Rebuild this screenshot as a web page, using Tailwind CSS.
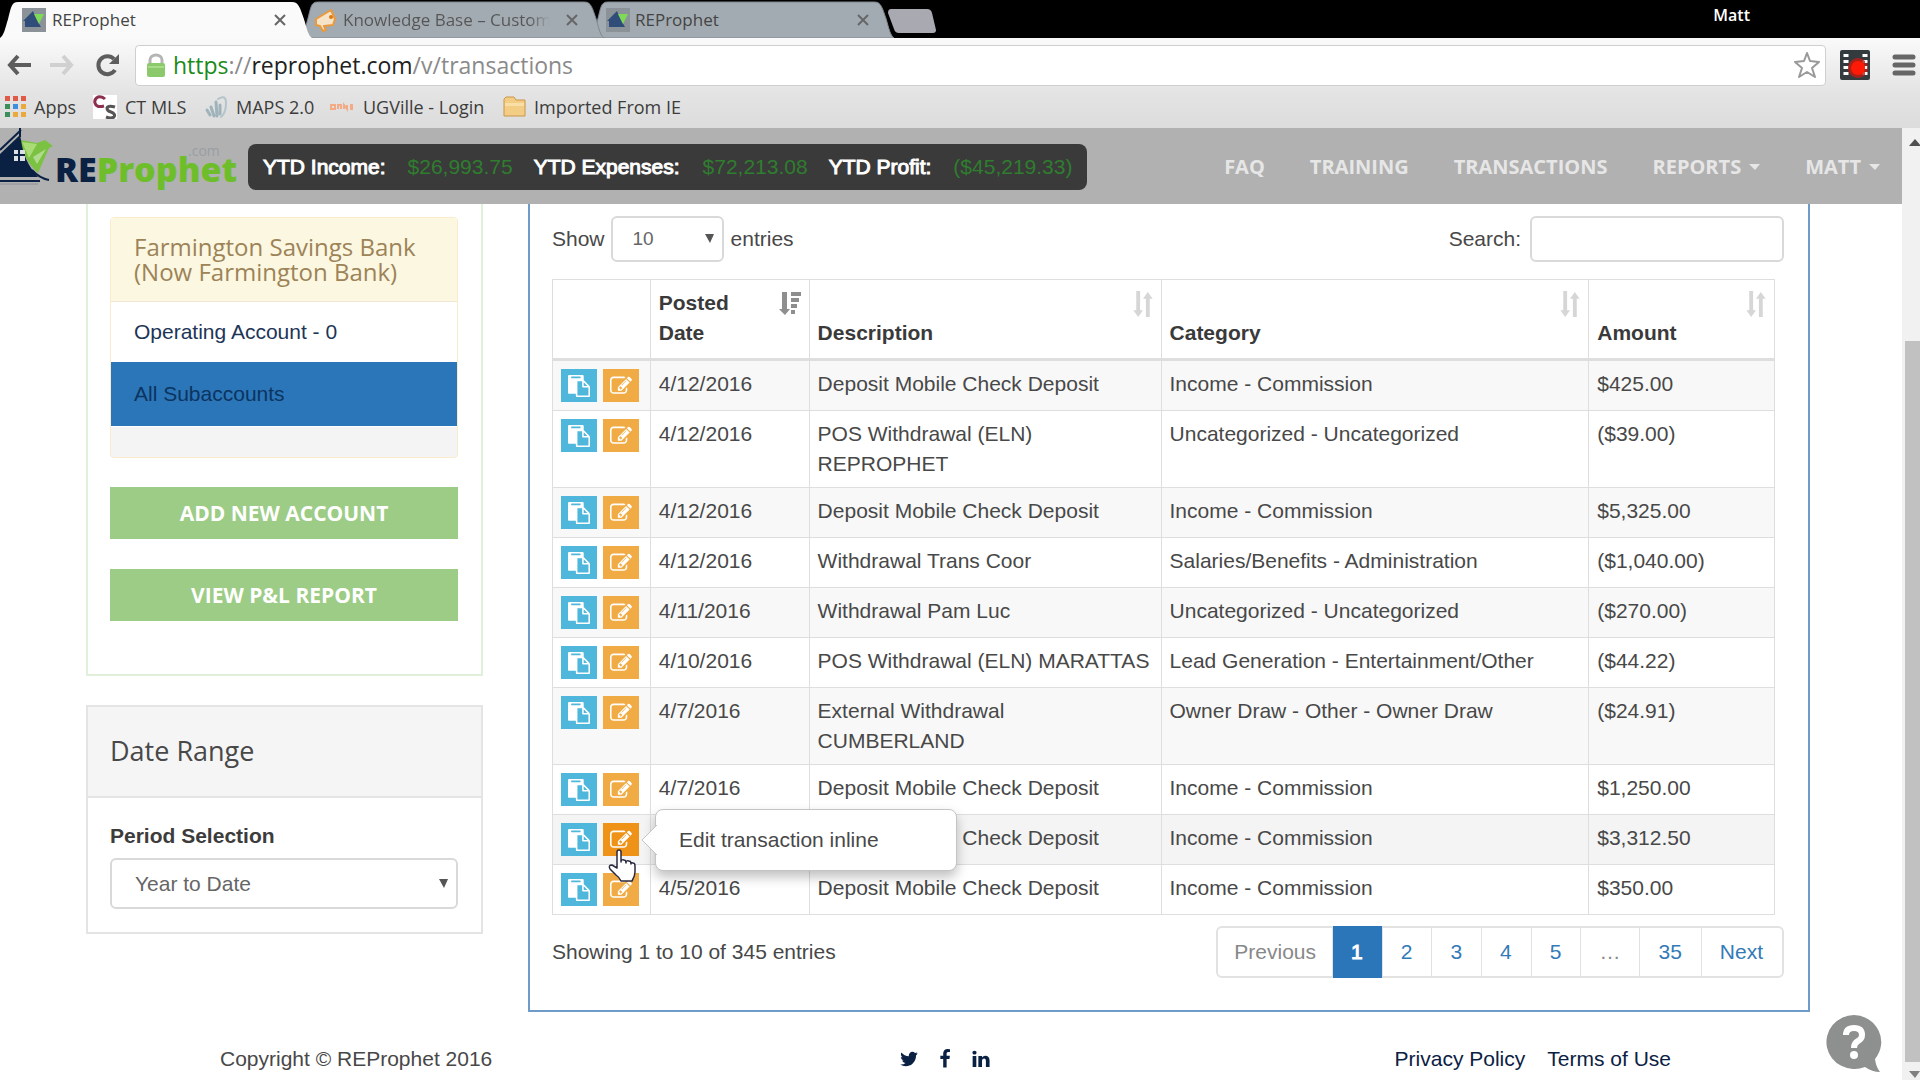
<!DOCTYPE html>
<html lang="en">
<head>
<meta charset="utf-8">
<meta name="viewport" content="width=device-width, initial-scale=1">
<title>REProphet</title>
<script src="https://cdn.jsdelivr.net/npm/@tailwindcss/browser@4"></script>
</head>
<body class="flex min-h-screen flex-col overflow-x-hidden bg-white font-['Liberation_Sans',Arial,sans-serif] text-[21px] leading-[30px] text-[#484848]">

<svg class="hidden" aria-hidden="true">
  <symbol id="paste" viewBox="0 0 1792 1792"><path d="M768 1664h896v-640h-416q-40 0-68-28t-28-68v-416h-384v1152zm256-1440v-64q0-13-9.500-22.500t-22.500-9.500h-704q-13 0-22.500 9.500t-9.500 22.500v64q0 13 9.500 22.500t22.500 9.500h704q13 0 22.500-9.500t9.500-22.500zm256 672h299l-299-299v299zm512 128v672q0 40-28 68t-68 28h-960q-40 0-68-28t-28-68v-160h-544q-40 0-68-28t-28-68v-1344q0-40 28-68t68-28h1088q40 0 68 28t28 68v328q21 13 36 28l408 408q28 28 48 76t20 88z"/></symbol>
  <symbol id="edit" viewBox="0 0 1792 1792"><path d="M888 1184l116-116-152-152-116 116v56h96v96h56zm440-720q-16-16-33 1l-350 350q-17 17-1 33t33-1l350-350q17-17 1-33zm80 594v190q0 119-84.500 203.500t-203.500 84.500h-832q-119 0-203.500-84.500t-84.500-203.500v-832q0-119 84.500-203.500t203.500-84.500h832q63 0 117 25 15 7 18 23 3 17-9 29l-49 49q-14 14-32 8-23-6-45-6h-832q-66 0-113 47t-47 113v832q0 66 47 113t113 47h832q66 0 113-47t47-113v-126q0-13 9-22l64-64q15-15 35-7t20 29zm-96-738l288 288-672 672h-288v-288zm444 132l-92 92-288-288 92-92q28-28 68-28t68 28l152 152q28 28 28 68t-28 68z"/></symbol>
  <symbol id="sort" viewBox="0 0 20 28"><path d="M3 0h4v20h3l-5 7-5-7h3zM13 27h4V8h3l-5-7-5 7h3z"/></symbol>
  <symbol id="favicon" viewBox="0 0 24 24"><path fill="#8b9399" d="M0 0h24v24H0z"/><path fill="#2f4d78" d="M1 13L11 3l4 9 4 7H3v-6z"/><path fill="#7ed957" d="M12 6h10l-5 10z"/></symbol>
  <symbol id="close" viewBox="0 0 12 12"><path stroke="#666" stroke-width="2" fill="none" d="M1 1l10 10M11 1L1 11"/></symbol>
  <symbol id="tab" viewBox="0 0 310 37" preserveAspectRatio="none"><path d="M0 37C4 34 5 28 8 18C11 7 11 1 18 1H290C297 1 298 7 302 18C305 28 306 34 310 37z"/></symbol>
</svg>

<!-- Browser tab strip -->
<div class="relative flex h-[38px] items-end bg-black font-['Open_Sans',sans-serif] text-[17px] text-[#444]">
  <div class="relative z-20 flex h-[37px] w-[312px] items-center">
    <svg class="absolute inset-0 size-full fill-[#fafafa]"><use href="#tab"/></svg>
    <svg class="relative ml-[22px] size-6"><use href="#favicon"/></svg>
    <span class="relative ml-[6px] flex-1">REProphet</span>
    <button class="relative mr-[26px]" aria-label="Close tab"><svg class="size-3"><use href="#close"/></svg></button>
  </div>
  <div class="relative z-10 -ml-[12px] flex h-[37px] w-[304px] items-center">
    <svg class="absolute inset-0 size-full fill-[#a3abb2] stroke-[#80878d]"><use href="#tab"/></svg>
    <svg class="relative ml-[13px] size-6" viewBox="0 0 24 24"><path fill="#f6e3c8" stroke="#e99a3c" stroke-width="2" stroke-linejoin="round" d="M18 2L3 11v6l4 1 3 5 3-1-2-4 9-1 2-6z"/><circle cx="18" cy="9" r="2" fill="#e07a10"/></svg>
    <span class="relative ml-[6px] w-[207px] overflow-hidden bg-gradient-to-r from-[#555] from-90% to-transparent bg-clip-text whitespace-nowrap text-transparent">Knowledge Base – Custom</span>
    <button class="relative ml-[16px]" aria-label="Close tab"><svg class="size-3"><use href="#close"/></svg></button>
  </div>
  <div class="relative -ml-[14px] flex h-[37px] w-[304px] items-center">
    <svg class="absolute inset-0 size-full fill-[#a3abb2] stroke-[#80878d]"><use href="#tab"/></svg>
    <svg class="relative ml-[16px] size-6"><use href="#favicon"/></svg>
    <span class="relative ml-[5px] flex-1">REProphet</span>
    <button class="relative mr-[25px]" aria-label="Close tab"><svg class="size-3"><use href="#close"/></svg></button>
  </div>
  <button class="mb-[5px] -ml-[6px]" aria-label="New tab"><svg class="h-[24px] w-[48px]" viewBox="0 0 48 24"><path fill="#a9a9b2" d="M3 0h36q4 0 5 4l4 17q0 3-3 3H11q-4 0-5-4L0 4q0-4 3-4z"/></svg></button>
  <span class="mr-[170px] mb-[9px] ml-auto text-[16px] leading-[28px] font-semibold text-white">Matt</span>
</div>

<!-- Address bar -->
<div class="flex h-[54px] items-center bg-gradient-to-b from-[#fafafa] to-[#e4e4e4] pl-[7px] font-['Open_Sans',sans-serif]">
  <button aria-label="Back"><svg class="size-6" viewBox="0 0 24 24" fill="none" stroke="#5d5d5d" stroke-width="4"><path d="M11 3L3 12l8 9M3 12h21"/></svg></button>
  <button class="ml-[19px]" aria-label="Forward"><svg class="size-6" viewBox="0 0 24 24" fill="none" stroke="#d0d0d0" stroke-width="4"><path d="M13 3l8 9-8 9M21 12H0"/></svg></button>
  <button class="ml-[22px]" aria-label="Reload"><svg class="size-6" viewBox="0 0 24 24"><path fill="none" stroke="#5d5d5d" stroke-width="4" d="M19 17A9 9 0 1 1 18 6"/><path fill="#5d5d5d" d="M23 1v10H13z"/></svg></button>
  <div class="ml-[15px] flex h-[41px] flex-1 items-center rounded border border-[#cfcfcf] bg-white pr-[4px] pl-[10px]">
    <svg class="h-[25px] w-[20px]" viewBox="0 0 20 25"><path fill="none" stroke="#b5b5b5" stroke-width="3" d="M4 12V7a6 5 0 0 1 12 0v5"/><rect x="1" y="10" width="18" height="14" rx="2" fill="#8cc96b"/><path stroke="#a8dc8b" stroke-width="2" d="M2 14h16"/></svg>
    <p class="ml-[7px] flex-1 text-[23px] whitespace-nowrap text-[#8a8a8a]"><span class="text-[#1b8a1b]">https</span>://<span class="text-[#222]">reprophet.com</span>/v/transactions</p>
    <button aria-label="Bookmark"><svg class="size-[28px]" viewBox="0 0 28 28"><path fill="#fff" stroke="#999" stroke-width="2" stroke-linejoin="round" d="M14 2l3 8 9 1-7 6 3 9-8-5-8 5 3-9-7-6 9-1z"/></svg></button>
  </div>
  <svg class="ml-[14px] h-[30px] w-[30px]" viewBox="0 0 30 30"><rect width="30" height="30" rx="2" fill="#343b3f"/><path stroke="#fff" stroke-width="5" stroke-dasharray="3 3" d="M6 4v24M25 4v24"/><circle cx="18" cy="18" r="10" fill="#c41a10" fill-opacity=".8"/><circle cx="18" cy="18" r="7" fill="#ff1a08"/><path stroke="#fff" stroke-width="2" stroke-dasharray="3 3" d="M26 4v24"/></svg>
  <button class="mr-[4px] ml-[22px]" aria-label="Menu"><svg class="h-[22px] w-[24px]" viewBox="0 0 24 22"><path stroke="#666" stroke-width="5" stroke-linecap="round" d="M3 3h18M3 11h18M3 19h18"/></svg></button>
</div>

<!-- Bookmarks bar -->
<nav class="flex h-[36px] items-center bg-gradient-to-b from-[#e4e4e4] to-[#dcdcdc] pb-[7px] pl-[5px] font-['Open_Sans',sans-serif] text-[18px] whitespace-nowrap text-[#3c3c3c]" aria-label="Bookmarks">
  <a href="#" class="flex w-[88px] items-center gap-[8px]">
    <svg class="size-[21px]" viewBox="0 0 21 21"><path fill="#e05a47" d="M0 0h5v5H0zM8 0h5v5H8zM16 0h5v5h-5z"/><path fill="#3a8f5c" d="M0 8h5v5H0zM0 16h5v5H0z"/><path fill="#3f8fe0" d="M8 8h5v5H8z"/><path fill="#eaa93a" d="M16 8h5v5h-5zM8 16h5v5H8zM16 16h5v5h-5z"/></svg>Apps</a>
  <a href="#" class="flex w-[111px] items-center gap-[8px]">
    <svg class="size-6 bg-white" viewBox="0 0 24 24" fill="none" stroke-width="3"><path stroke="#8c2f50" d="M12 4Q9 1 5 2 1 4 2 8q1 5 9 3"/><path stroke="#555" d="M22 12q-7-2-8 1 0 3 4 4 5 2 3 5-3 2-8 0"/></svg>CT MLS</a>
  <a href="#" class="flex w-[126px] items-center gap-[8px]">
    <svg class="size-6" viewBox="0 0 24 24" fill="none" stroke="#9fb3bb" stroke-width="3" stroke-linecap="round"><path d="M3 15l3 5M7 12l3 9M12 7l1 14M16 10v9"/><path stroke="#b4c4ca" stroke-width="2" d="M14 4q8-5 8 4 0 10-5 14"/></svg>MAPS 2.0</a>
  <a href="#" class="flex w-[173px] items-center gap-[9px]">
    <svg class="size-6" viewBox="0 0 24 24" fill="none" stroke="#f2ab84" stroke-width="2"><path d="M1 10v4h4v-4zM8 14v-4h3v4M14 14v-4l3 4v-4M20 10h3M20 12h3M20 14h3"/></svg>UGVille - Login</a>
  <a href="#" class="flex items-center gap-[8px]">
    <svg class="size-[23px]" viewBox="0 0 23 23"><path fill="#f4cd84" stroke="#c9964a" d="M1 4l2-2h8l2 3h9v16H1z"/><path fill="#f9dea6" d="M2 8h19v3H2z"/></svg>Imported From IE</a>
</nav>

<!-- Page viewport -->
<div class="flex flex-1">
  <div class="flex min-w-0 flex-1 flex-col">
    <header class="flex h-[76px] items-center bg-[#b1b1b1] pr-[22px]">
      <a href="#" class="relative flex h-full w-[248px] shrink-0 items-center">
        <svg class="mb-[12px] h-[64px] w-[53px] shrink-0" viewBox="0 0 53 64"><path fill="#7cc242" d="M20 12l17 3 8-3 8 6-4 2-11 25C29 37 22 25 20 12z"/><path fill="#a9dc76" d="M22 14l15 2-8 14z"/><path fill="#fff" opacity=".4" d="M33 29l13-8-9 15z"/><path fill="#0b2143" d="M0 26L20 7l1 5c2 14 7 26 17 37H0z"/><path stroke="#0b2143" stroke-width="2" fill="none" d="M20 0v9M0 22L21 2M32 42q7 8 17 10M0 53h40"/><path stroke="#8e9099" stroke-width="1" d="M0 56h38"/><path fill="#dcdfe3" d="M14 22h11v11H14z"/><path stroke="#0b2143" stroke-width="2" d="M19 22v11M14 27h11"/></svg>
        <span class="mt-[6px] ml-[2px] font-['Open_Sans',sans-serif] text-[34px] leading-none font-extrabold text-[#0b2143]">RE<span class="text-[#6ebe2c]">Prophet</span></span>
        <span class="absolute top-[16px] left-[188px] font-['Open_Sans',sans-serif] text-[14px] leading-none text-[#989ea4]">.com</span>
      </a>
      <dl class="mt-[2px] flex h-[46px] items-center rounded-lg bg-[#3a3a3a] px-[15px] whitespace-nowrap text-[#2f7d2f] [&_dt]:text-white [&_dt]:[-webkit-text-stroke:1px_white]">
        <dt>YTD Income:</dt><dd class="mr-[21px] ml-[22px]">$26,993.75</dd>
        <dt>YTD Expenses:</dt><dd class="mr-[21px] ml-[23px]">$72,213.08</dd>
        <dt>YTD Profit:</dt><dd class="ml-[22px]">($45,219.33)</dd>
      </dl>
      <nav class="mt-[2px] ml-auto flex items-center gap-[45px] font-['Open_Sans',sans-serif] text-[20px] font-bold text-[#e6e6e6]">
        <a href="#">FAQ</a><a href="#">TRAINING</a><a href="#">TRANSACTIONS</a>
        <a href="#" class="flex items-center gap-[8px]">REPORTS<svg class="h-[6px] w-[11px] fill-current" viewBox="0 0 11 6"><path d="M0 0h11L6 6z"/></svg></a>
        <a href="#" class="flex items-center gap-[8px]">MATT<svg class="h-[6px] w-[11px] fill-current" viewBox="0 0 11 6"><path d="M0 0h11L6 6z"/></svg></a>
      </nav>
    </header>

    <main class="flex items-start pr-[92px] pl-[86px]">
      <aside class="w-[397px] shrink-0">
        <section class="border-2 border-t-0 border-[#e0f0da] pt-[13px] pr-[23px] pb-[53px] pl-[22px]">
          <div class="rounded border border-[#faebcc] bg-[#f4f4f4]">
            <h4 class="border-b border-[#eee6d0] bg-[#fcf7e1] px-[23px] pt-[16px] pb-[17px] font-['Open_Sans',sans-serif] text-[24px] leading-[25px] text-[#9c8358]">Farmington Savings Bank (Now Farmington Bank)</h4>
            <a href="#" class="block bg-white px-[23px] py-[15px] text-[#1d3557]">Operating Account - 0</a>
            <a href="#" class="block border-b border-white bg-[#2b76b9] px-[23px] py-[17px] text-[#0b3460]">All Subaccounts</a>
            <div class="h-[30px]"></div>
          </div>
          <button class="mt-[29px] block h-[52px] w-full bg-[#9ccc85] font-['Open_Sans',sans-serif] text-[21px] font-bold text-white">ADD NEW ACCOUNT</button>
          <button class="mt-[30px] block h-[52px] w-full bg-[#9ccc85] font-['Open_Sans',sans-serif] text-[21px] font-bold text-white">VIEW P&amp;L REPORT</button>
        </section>
        <section class="mt-[29px] border-2 border-[#e4e4e4] pr-[23px] pb-[23px] pl-[22px]">
          <h3 class="-mr-[23px] -ml-[22px] border-b-2 border-[#e4e4e4] bg-[#f5f5f5] px-[22px] pt-[29px] pb-[30px] font-['Open_Sans',sans-serif] text-[27px]">Date Range</h3>
          <label for="period" class="mt-[23px] block font-bold text-[#3c3c3c]">Period Selection</label>
          <div class="relative mt-[7px]">
            <select id="period" class="h-[51px] w-full appearance-none rounded-md border-2 border-[#d9d9d9] bg-white px-[23px] text-[21px] text-[#666]"><option>Year to Date</option></select>
            <svg class="pointer-events-none absolute top-[21px] right-[10px] size-[9px] fill-[#555]" viewBox="0 0 9 9"><path d="M0 0h9L5 9z"/></svg>
          </div>
        </section>
      </aside>

      <section class="ml-[45px] min-w-0 flex-1 border-2 border-t-0 border-[#6f9bc9] pt-[12px] pr-[24px] pb-[32px] pl-[22px]">
        <div class="flex items-center justify-between">
          <div class="flex items-center">
            <label for="length">Show</label>
            <div class="relative mr-[7px] ml-[6px]">
              <select id="length" class="h-[46px] w-[113px] appearance-none rounded-md border-2 border-[#d9d9d9] bg-white px-[20px] text-[19px] text-[#666]"><option>10</option></select>
              <svg class="pointer-events-none absolute top-[18px] right-[10px] size-[9px] fill-[#555]" viewBox="0 0 9 9"><path d="M0 0h9L5 9z"/></svg>
            </div>
            <span>entries</span>
          </div>
          <label class="flex items-center gap-[9px]">Search:<input type="search" class="h-[46px] w-[254px] rounded-md border-2 border-[#d9d9d9] bg-white px-3"></label>
        </div>

        <div class="mt-[17px] pr-[9px]">
        <table class="w-full table-fixed border-collapse text-left [&_button]:flex [&_button]:h-[33px] [&_button]:w-[36px] [&_button]:items-center [&_button]:justify-center [&_button]:bg-[#f0ab45] [&_button:first-child]:bg-[#4fb6dc] [&_button_svg]:size-[22px] [&_button_svg]:fill-white [&_td]:border [&_td]:border-[#dedede] [&_td]:p-2 [&_td]:align-top [&_td>div]:-mr-1 [&_td>div]:flex [&_td>div]:gap-[6px] [&_th]:border [&_th]:border-b-[3px] [&_th]:border-[#dedede] [&_th]:p-2 [&_th]:pb-[10px] [&_th]:align-bottom [&_th]:text-[#3a3a3a] [&_tbody>tr:nth-child(odd)]:bg-[#f8f8f8]">
          <colgroup><col class="w-[8%]"><col class="w-[13%]"><col class="w-[28.8%]"><col class="w-[35%]"><col></colgroup>
          <thead>
            <tr>
              <th aria-label="Actions"></th>
              <th><div class="flex items-start justify-between">Posted<br>Date<svg class="mt-[4px] h-[24px] w-[22px] fill-[#8e8e8e]" viewBox="0 0 22 24"><path d="M3 0h5v17h3l-5 6-6-6h3zM12 0h10v4H12zM12 6h8v4h-8zM12 12h6v4h-6zM12 18h4v4h-4z"/></svg></div></th>
              <th><div class="flex items-end justify-between">Description<svg class="mb-[30px] h-[27px] w-[20px] fill-[#d6d6d6]"><use href="#sort"/></svg></div></th>
              <th><div class="flex items-end justify-between">Category<svg class="mb-[30px] h-[27px] w-[20px] fill-[#d6d6d6]"><use href="#sort"/></svg></div></th>
              <th><div class="flex items-end justify-between">Amount<svg class="mb-[30px] h-[27px] w-[20px] fill-[#d6d6d6]"><use href="#sort"/></svg></div></th>
            </tr>
          </thead>
          <tbody>
            <tr><td><div><button aria-label="Copy"><svg><use href="#paste"/></svg></button><button aria-label="Edit"><svg><use href="#edit"/></svg></button></div></td><td>4/12/2016</td><td>Deposit Mobile Check Deposit</td><td>Income - Commission</td><td>$425.00</td></tr>
            <tr><td><div><button aria-label="Copy"><svg><use href="#paste"/></svg></button><button aria-label="Edit"><svg><use href="#edit"/></svg></button></div></td><td>4/12/2016</td><td>POS Withdrawal (ELN) REPROPHET</td><td>Uncategorized - Uncategorized</td><td>($39.00)</td></tr>
            <tr><td><div><button aria-label="Copy"><svg><use href="#paste"/></svg></button><button aria-label="Edit"><svg><use href="#edit"/></svg></button></div></td><td>4/12/2016</td><td>Deposit Mobile Check Deposit</td><td>Income - Commission</td><td>$5,325.00</td></tr>
            <tr><td><div><button aria-label="Copy"><svg><use href="#paste"/></svg></button><button aria-label="Edit"><svg><use href="#edit"/></svg></button></div></td><td>4/12/2016</td><td>Withdrawal Trans Coor</td><td>Salaries/Benefits - Administration</td><td>($1,040.00)</td></tr>
            <tr><td><div><button aria-label="Copy"><svg><use href="#paste"/></svg></button><button aria-label="Edit"><svg><use href="#edit"/></svg></button></div></td><td>4/11/2016</td><td>Withdrawal Pam Luc</td><td>Uncategorized - Uncategorized</td><td>($270.00)</td></tr>
            <tr><td><div><button aria-label="Copy"><svg><use href="#paste"/></svg></button><button aria-label="Edit"><svg><use href="#edit"/></svg></button></div></td><td>4/10/2016</td><td>POS Withdrawal (ELN) MARATTAS</td><td>Lead Generation - Entertainment/Other</td><td>($44.22)</td></tr>
            <tr><td><div><button aria-label="Copy"><svg><use href="#paste"/></svg></button><button aria-label="Edit"><svg><use href="#edit"/></svg></button></div></td><td>4/7/2016</td><td>External Withdrawal CUMBERLAND</td><td>Owner Draw - Other - Owner Draw</td><td>($24.91)</td></tr>
            <tr><td><div><button aria-label="Copy"><svg><use href="#paste"/></svg></button><button aria-label="Edit"><svg><use href="#edit"/></svg></button></div></td><td>4/7/2016</td><td>Deposit Mobile Check Deposit</td><td>Income - Commission</td><td>$1,250.00</td></tr>
            <tr class="bg-[#f4f4f4]!"><td>
              <div class="relative">
                <button aria-label="Copy"><svg><use href="#paste"/></svg></button><button class="bg-[#ee9318]!" aria-label="Edit"><svg><use href="#edit"/></svg></button>
                <!-- Popover for the hovered edit button -->
                <span role="tooltip" class="absolute -top-[14px] left-[94px] z-10 flex h-[62px] w-[302px] items-center rounded-lg border border-[#c4c4c4] bg-white px-[23px] whitespace-nowrap shadow-[0_6px_12px_rgba(0,0,0,0.25)]">Edit transaction inline
                  <svg class="absolute top-[15px] -left-[15px] h-[30px] w-[16px]" viewBox="0 0 16 30"><path fill="#fff" stroke="#c4c4c4" d="M16 0L1 15l15 15"/></svg>
                </span>
                <svg class="absolute top-[26px] left-[47px] z-20 h-[34px] w-[28px]" viewBox="0 0 28 34"><path fill="#fff" stroke="#2a2a40" stroke-width="1.500" stroke-linejoin="round" d="M9 19V3q0-2 2-2t2 2v10q0-3 3-2 2 0 2 3 0-3 3-2 2 0 2 3 0-2 2-1 2 0 2 3v6q0 4-3 9H13q-2-4-5-6l-6-6q-2-4 2-4z"/></svg>
              </div></td><td>4/6/2016</td><td>Deposit Mobile Check Deposit</td><td>Income - Commission</td><td>$3,312.50</td></tr>
            <tr class="bg-white!"><td><div><button aria-label="Copy"><svg><use href="#paste"/></svg></button><button aria-label="Edit"><svg><use href="#edit"/></svg></button></div></td><td>4/5/2016</td><td>Deposit Mobile Check Deposit</td><td>Income - Commission</td><td>$350.00</td></tr>
          </tbody>
        </table>
        </div>

        <div class="mt-[11px] flex items-start justify-between">
          <p class="mt-[11px]">Showing 1 to 10 of 345 entries</p>
          <nav class="flex h-[52px] rounded-md border-2 border-[#e2e2e2] text-[#337ab7] [&>*]:flex [&>*]:items-center [&>*]:border-r [&>*]:border-[#e2e2e2] [&>*]:pr-[19px] [&>*]:pl-[18px] [&>*:first-child]:px-[16px] [&>*:last-child]:border-r-0" aria-label="Pagination">
            <span class="text-[#888]">Previous</span>
            <a href="#" aria-current="page" class="-my-[2px] bg-[#2b76b9] text-white [-webkit-text-stroke:1px_white]">1</a>
            <a href="#">2</a><a href="#">3</a><a href="#">4</a><a href="#">5</a>
            <span class="text-[#888]">…</span><a href="#">35</a><a href="#">Next</a>
          </nav>
        </div>
      </section>
    </main>

    <footer class="relative grid flex-1 grid-cols-3 items-center pt-[31px] pr-[231px] pb-[6px] pl-[220px] text-[#0b2143]">
      <p class="text-[#484848]">Copyright © REProphet 2016</p>
      <div class="flex items-center justify-center gap-[16px]">
        <a href="#" aria-label="Twitter"><svg class="size-5 fill-current" viewBox="0 0 1792 1792"><path d="M1684 408q-67 98-162 167 1 14 1 42 0 130-38 259.500t-115.500 248.500-184.500 210.500-258 146-323 54.500q-271 0-496-145 35 4 78 4 225 0 401-138-105-2-188-64.500t-114-159.500q33 5 61 5 43 0 85-11-112-23-185.500-111.500t-73.500-205.500v-4q68 38 146 41-66-44-105-115t-39-154q0-88 44-163 121 149 294.500 238.500t371.500 99.500q-8-38-8-74 0-134 94.500-228.500t228.500-94.500q140 0 236 102 109-21 205-78-37 115-142 178 93-10 186-50z"/></svg></a>
        <a href="#" aria-label="Facebook"><svg class="size-5 fill-current" viewBox="0 0 1792 1792"><path d="M1343 12v264h-157q-86 0-116 36t-30 108v189h293l-39 296h-254v759h-306v-759h-255v-296h255v-218q0-186 104-288.500t277-102.500q147 0 228 12z"/></svg></a>
        <a href="#" aria-label="LinkedIn"><svg class="size-5 fill-current" viewBox="0 0 1792 1792"><path d="M477 625v991h-330v-991h330zm21-306q1 73-50.500 122t-135.500 49h-2q-82 0-132-49t-50-122q0-74 51.500-122.500t134.500-48.500 133 48.500 51 122.500zm1166 729v568h-329v-530q0-105-40.500-164.500t-126.500-59.500q-63 0-105.500 34.500t-63.500 85.500q-11 30-11 81v553h-329q2-399 2-647t-1-296l-1-48h329v144h-2q20-32 41-56t56.500-52 87-43.500 114.500-15.500q171 0 275 113.500t104 332.500z"/></svg></a>
      </div>
      <div class="flex justify-end gap-[22px]"><a href="#">Privacy Policy</a><a href="#">Terms of Use</a></div>
      <button class="absolute right-[18px] bottom-[7px]" aria-label="Help">
        <svg class="h-[58px] w-[58px]" viewBox="0 0 58 58"><path fill="#8e908f" d="M28 0a28 27 0 0 1 21 44q1 8 5 13-8 0-15-5A28 27 0 1 1 28 0z"/><path fill="none" stroke="#fff" stroke-width="6" d="M20 20q0-7 8-7t8 7q0 4-4 6t-4 7"/><circle cx="28" cy="40" r="4" fill="#fff"/></svg>
      </button>
    </footer>
  </div>

  <!-- Page scrollbar -->
  <div class="flex w-[18px] flex-col justify-between bg-[#f1f1f1] pl-[3px]" aria-hidden="true">
    <svg class="mt-[11px] ml-[4px] h-[8px] w-[11px] fill-[#505050]" viewBox="0 0 11 8"><path d="M6 0l6 7H0z"/></svg>
    <div class="mt-[194px] mb-[9px] flex-1 bg-[#c1c1c1]"></div>
    <svg class="mb-[2px] ml-[4px] h-[7px] w-[11px] fill-[#808080]" viewBox="0 0 11 7"><path d="M0 0h11L6 7z"/></svg>
  </div>
</div>
</body>
</html>
